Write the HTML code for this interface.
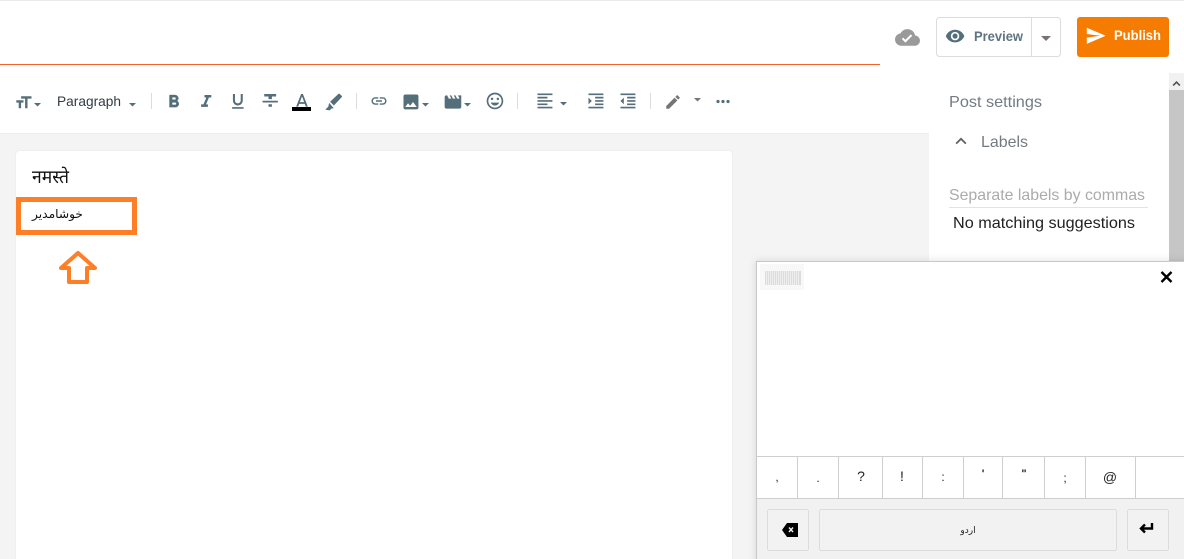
<!DOCTYPE html>
<html><head><meta charset="utf-8"><style>
html,body{margin:0;padding:0;width:1184px;height:559px;overflow:hidden;background:#fff}
svg{display:block;position:absolute;left:0;top:0}
text{font-family:"Liberation Sans","DejaVu Sans",sans-serif}
</style></head><body>
<svg width="1184" height="559" viewBox="0 0 1184 559" xmlns="http://www.w3.org/2000/svg">
<defs>
<path id="tri" d="M0 0h7l-3.500 3.500z"/>
<filter id="sh" x="-5%" y="-5%" width="110%" height="110%"><feDropShadow dx="0" dy="0" stdDeviation="4" flood-color="#000" flood-opacity=".13"/></filter>
</defs>
<rect width="1184" height="559" fill="#fff"/>
<rect x="0" y="0" width="1184" height="1" fill="#e8eaed"/>
<rect x="0" y="64" width="880" height="1" fill="#f4622a"/>
<!-- content bg -->
<rect x="0" y="133" width="929" height="426" fill="#f4f4f4"/>
<rect x="0" y="133" width="929" height="1" fill="#eeeeee"/>
<rect x="15.500" y="150.500" width="717" height="420" rx="4" fill="#fff" stroke="#efefef"/>
<!-- scrollbar -->
<rect x="1169" y="73" width="15" height="189" fill="#c6c6c6"/>
<rect x="1169" y="73" width="15" height="17" fill="#f1f1f1"/>
<path d="M1172.500 85l4-4 4 4-1.300 1-2.700-2.700-2.700 2.700z" fill="#505050"/>

<!-- top right -->
<g transform="translate(895,25) scale(1.040)" fill="#9a9a9a"><path d="M19.350 10.040C18.670 6.590 15.640 4 12 4 9.110 4 6.600 5.640 5.350 8.040 2.340 8.360 0 10.910 0 14c0 3.310 2.690 6 6 6h13c2.760 0 5-2.240 5-5 0-2.640-2.050-4.780-4.650-4.960zM10 17l-3.500-3.500 1.410-1.410L10 14.170 15.180 9l1.410 1.410L10 17z"/></g>
<rect x="936.500" y="17.500" width="124" height="39" rx="3" fill="#fff" stroke="#dadce0"/>
<rect x="1031" y="18" width="1" height="38" fill="#dadce0"/>
<g transform="translate(945,26) scale(.84)" fill="#546e7a"><path d="M12 4.500C7 4.500 2.730 7.610 1 12c1.730 4.390 6 7.500 11 7.500s9.270-3.110 11-7.500c-1.730-4.390-6-7.500-11-7.500zM12 17c-2.760 0-5-2.240-5-5s2.240-5 5-5 5 2.240 5 5-2.240 5-5 5zm0-8c-1.660 0-3 1.340-3 3s1.340 3 3 3 3-1.340 3-3-1.340-3-3-3z"/></g>
<text x="974" y="41" font-size="14" font-weight="700" fill="#5f7582" textLength="49" lengthAdjust="spacingAndGlyphs">Preview</text>
<path d="M1041 36h10l-5 5z" fill="#7a7078"/>
<rect x="1077" y="17" width="92" height="40" rx="3" fill="#f57c00"/>
<g transform="translate(1085,25) scale(.9)" fill="#fff"><path d="M2.010 21L23 12 2.010 3 2 10l15 2-15 2z"/></g>
<text x="1114" y="40" font-size="14" font-weight="700" fill="#fff" textLength="47" lengthAdjust="spacingAndGlyphs">Publish</text>

<!-- toolbar -->
<g fill="#546e7a">
<g transform="translate(33.500,93) scale(-.8,.8)"><path d="M2.500 4v3h5v12h3V7h5V4h-13zm19 5h-9v3h3v7h3v-7h3V9z"/></g>
<use href="#tri" x="34" y="103"/>
<use href="#tri" x="129" y="103"/>
<g transform="translate(163.500,91.600) scale(.86)" stroke="#546e7a" stroke-width=".5"><path d="M15.600 10.790c.97-.67 1.650-1.770 1.650-2.790 0-2.260-1.750-4-4-4H7v14h7.040c2.090 0 3.710-1.700 3.710-3.790 0-1.520-.86-2.820-2.150-3.420zM10 6.500h3c.83 0 1.500.67 1.500 1.500s-.67 1.500-1.500 1.500h-3v-3zm3.500 9H10v-3h3.500c.83 0 1.500.67 1.500 1.500s-.67 1.500-1.500 1.500z"/></g>
<g transform="translate(196,91.600) scale(.85)"><path d="M10 4v3h2.210l-3.420 8H6v3h8v-3h-2.210l3.420-8H18V4z"/></g>
<g transform="translate(228,91.500) scale(.82)"><path d="M12 17c3.310 0 6-2.690 6-6V3h-2.500v8c0 1.930-1.570 3.500-3.500 3.500S8.500 12.930 8.500 11V3H6v8c0 3.310 2.690 6 6 6zm-7 2v2h14v-2H5z"/></g>
<g transform="translate(260,90.600) scale(.85)"><path d="M10 19h4v-3h-4v3zM5 4v3h5v3h4V7h5V4H5zM3 14h18v-2H3v2z"/></g>
<g transform="translate(291.200,91.300) scale(.9)"><path d="M11 3L5.500 17h2.250l1.120-3h6.250l1.120 3h2.250L13 3h-2zm-1.380 9L12 5.670 14.380 12H9.620z"/></g>
<g transform="translate(323.500,91) scale(.88)"><path d="M20.700 5.600l-2.300-2.300c-.4-.4-1-.4-1.400 0L7.500 12.200l4.300 4.300 8.900-9.500c.4-.4.4-1 0-1.400zM6.400 13.500l-.9 4.200-3.500 3.500 5 .8 2-2 2.600-.5z"/></g>
<g transform="translate(370,92) scale(.75)"><path d="M3.900 12c0-1.710 1.390-3.100 3.100-3.100h4V7H7c-2.760 0-5 2.240-5 5s2.240 5 5 5h4v-1.900H7c-1.710 0-3.100-1.390-3.100-3.100zM8 13h8v-2H8v2zm9-6h-4v1.900h4c1.710 0 3.100 1.390 3.100 3.100s-1.390 3.100-3.100 3.100h-4V17h4c2.760 0 5-2.240 5-5s-2.240-5-5-5z"/></g>
<g transform="translate(401,92) scale(.83)"><path d="M21 19V5c0-1.100-.9-2-2-2H5c-1.100 0-2 .9-2 2v14c0 1.100.9 2 2 2h14c1.100 0 2-.9 2-2zM8.500 13.500l2.500 3.010L14.500 12l4.500 6H5l3.500-4.500z"/></g>
<use href="#tri" x="422" y="103"/>
<g transform="translate(443,92) scale(.83)"><path d="M18 4l2 4h-3l-2-4h-2l2 4h-3l-2-4H8l2 4H7L5 4H4c-1.100 0-1.990.9-1.990 2L2 18c0 1.100.9 2 2 2h16c1.100 0 2-.9 2-2V4h-4z"/></g>
<use href="#tri" x="464" y="103"/>
<g transform="translate(485,91) scale(.83)"><path d="M11.990 2C6.470 2 2 6.480 2 12s4.470 10 9.990 10C17.520 22 22 17.520 22 12S17.520 2 11.990 2zM12 20c-4.420 0-8-3.580-8-8s3.580-8 8-8 8 3.580 8 8-3.580 8-8 8zm3.500-9c.83 0 1.500-.67 1.500-1.500S16.330 8 15.500 8 14 8.670 14 9.500s.67 1.500 1.500 1.500zm-7 0c.83 0 1.500-.67 1.500-1.500S9.330 8 8.500 8 7 8.670 7 9.500 7.670 11 8.500 11zm3.500 6.500c2.330 0 4.310-1.460 5.110-3.500H6.890c.8 2.040 2.780 3.500 5.110 3.500z"/></g>
<g transform="translate(535,91) scale(.83)"><path d="M15 15H3v2h12v-2zm0-8H3v2h12V7zM3 13h18v-2H3v2zm0 8h18v-2H3v2zM3 3v2h18V3H3z"/></g>
<use href="#tri" x="560" y="102"/>
<g transform="translate(586,91) scale(.83)"><path d="M3 21h18v-2H3v2zM3 8v8l4-4-4-4zm8 9h10v-2H11v2zM3 3v2h18V3H3zm8 6h10V7H11v2zm0 4h10v-2H11v2z"/></g>
<g transform="translate(618,91) scale(.83)"><path d="M11 17h10v-2H11v2zm-8-5l4 4V8l-4 4zm0 9h18v-2H3v2zM3 3v2h18V3H3zm8 6h10V7H11v2zm0 4h10v-2H11v2z"/></g>
<circle cx="718" cy="101.500" r="1.600"/><circle cx="723" cy="101.500" r="1.600"/><circle cx="728" cy="101.500" r="1.600"/>
</g>
<g fill="#757575">
<g transform="translate(664,93) scale(.75)"><path d="M3 17.250V21h3.750L17.810 9.940l-3.750-3.750L3 17.250zM20.710 7.040c.39-.39.39-1.020 0-1.410l-2.340-2.340c-.39-.39-1.020-.39-1.410 0l-1.830 1.830 3.750 3.750 1.830-1.830z"/></g>
<use href="#tri" x="694" y="98"/>
</g>
<rect x="292" y="107" width="19" height="4" fill="#000"/>
<g fill="#dcdcdc">
<rect x="151" y="93" width="1" height="16"/><rect x="356" y="93" width="1" height="16"/><rect x="517" y="93" width="1" height="16"/><rect x="650" y="93" width="1" height="16"/>
</g>
<text x="57" y="106" font-size="14" fill="#333b42" textLength="64" lengthAdjust="spacingAndGlyphs">Paragraph</text>

<!-- sidebar -->
<text x="949" y="107" font-size="16" fill="#737b82" textLength="93" lengthAdjust="spacingAndGlyphs">Post settings</text>
<path d="M955.500 143l5.500-5.500 5.500 5.500-1.300 1.300-4.200-4.200-4.200 4.200z" fill="#5f6368"/>
<text x="981" y="147" font-size="16" fill="#737b82" textLength="47" lengthAdjust="spacingAndGlyphs">Labels</text>
<text x="949" y="200" font-size="16" fill="#ababab" textLength="196" lengthAdjust="spacingAndGlyphs">Separate labels by commas</text>
<rect x="949" y="207" width="199" height="1" fill="#e3e3e3"/>
<text x="953" y="228" font-size="16" fill="#202124" textLength="182" lengthAdjust="spacingAndGlyphs">No matching suggestions</text>

<!-- editor -->
<text x="32" y="183" font-size="18" fill="#111" textLength="37" lengthAdjust="spacingAndGlyphs" style="font-family:'Liberation Sans','Noto Sans Devanagari','Lohit Devanagari','FreeSans',sans-serif">नमस्ते</text>
<rect x="18.500" y="199.500" width="116" height="33" fill="none" stroke="#ff7f27" stroke-width="5"/>
<text x="83" y="218" font-size="12" fill="#111" direction="rtl" text-anchor="start" textLength="51" lengthAdjust="spacingAndGlyphs" style="font-family:'DejaVu Sans',sans-serif">خوشامدیر</text>
<path d="M78 253L95 268H87v14H69v-14H61z" fill="#fff" stroke="#ff7f27" stroke-width="4" stroke-linejoin="round"/>

<!-- keyboard -->
<rect x="756.500" y="261.500" width="440" height="310" fill="#fff" stroke="#c8c8c8" filter="url(#sh)"/>
<rect x="760" y="264" width="44" height="26" fill="#f8f8f8"/>
<rect x="765" y="271" width="36" height="14" fill="#dcdcdc"/>
<g fill="#eeeeee"><rect x="766" y="271" width="1" height="14"/><rect x="768" y="271" width="1" height="14"/><rect x="770" y="271" width="1" height="14"/><rect x="772" y="271" width="1" height="14"/><rect x="774" y="271" width="1" height="14"/><rect x="776" y="271" width="1" height="14"/><rect x="778" y="271" width="1" height="14"/><rect x="780" y="271" width="1" height="14"/><rect x="782" y="271" width="1" height="14"/><rect x="784" y="271" width="1" height="14"/><rect x="786" y="271" width="1" height="14"/><rect x="788" y="271" width="1" height="14"/><rect x="790" y="271" width="1" height="14"/><rect x="792" y="271" width="1" height="14"/><rect x="794" y="271" width="1" height="14"/><rect x="796" y="271" width="1" height="14"/><rect x="798" y="271" width="1" height="14"/></g>
<path d="M1161.500 272l10 10M1171.500 272l-10 10" stroke="#000" stroke-width="2.400" fill="none"/>
<rect x="757" y="456" width="427" height="1" fill="#cfcfcf"/>
<rect x="757" y="498" width="427" height="61" fill="#f1f1f1"/>
<rect x="757" y="498" width="427" height="1" fill="#cfcfcf"/>
<g fill="#cfcfcf"><rect x="797" y="457" width="1" height="41"/><rect x="838" y="457" width="1" height="41"/><rect x="882" y="457" width="1" height="41"/><rect x="922" y="457" width="1" height="41"/><rect x="963" y="457" width="1" height="41"/><rect x="1002" y="457" width="1" height="41"/><rect x="1044" y="457" width="1" height="41"/><rect x="1085" y="457" width="1" height="41"/><rect x="1135" y="457" width="1" height="41"/></g>
<g font-size="14" fill="#222" text-anchor="middle">
<text x="777" y="481" font-size="12">,</text>
<text x="818" y="482" font-size="12">.</text>
<text x="861" y="481">?</text>
<text x="902" y="481">!</text>
<text x="943" y="481" font-size="12">:</text>
<text x="983" y="477" font-size="11" font-weight="700">'</text>
<text x="1024" y="477" font-size="11" font-weight="700">"</text>
<text x="1065" y="482" font-size="12">;</text>
<text x="1110" y="482">@</text>
</g>
<g fill="#f2f2f2" stroke="#dcdcdc"><rect x="767.500" y="509.500" width="41" height="41" rx="2"/><rect x="819.500" y="509.500" width="297" height="41" rx="2"/><rect x="1127.500" y="509.500" width="41" height="41" rx="2"/></g>
<path d="M782 530l5-7h11v14h-11z" fill="#000"/>
<path d="M789 527.500l4 4.500M793 527.500l-4 4.500" stroke="#f2f2f2" stroke-width="1.400" fill="none"/>
<path d="M1152 523v5.500h-10M1145 524.500l-4 4 4 4" fill="none" stroke="#000" stroke-width="2.400"/>
<text x="968" y="533" font-size="9" fill="#222" text-anchor="middle" style="font-family:'DejaVu Sans',sans-serif">اردو</text>
</svg>
</body></html>
